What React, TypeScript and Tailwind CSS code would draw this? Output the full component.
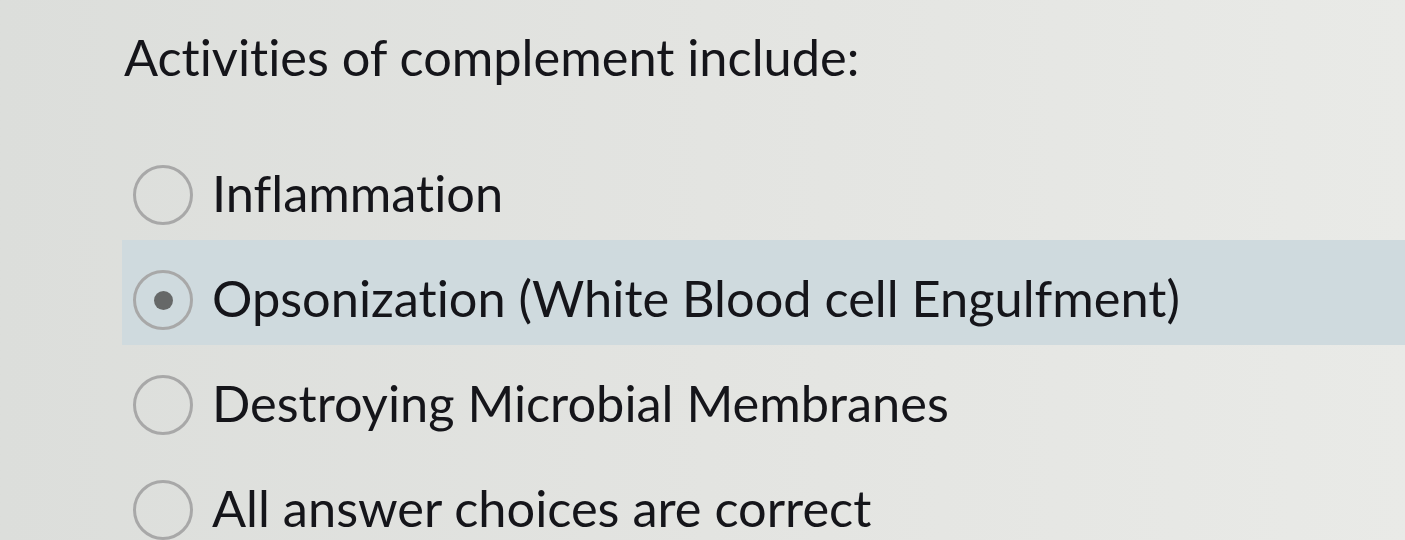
import React from "react";

const options = [
  { label: "Inflammation", selected: false },
  { label: "Opsonization (White Blood cell Engulfment)", selected: true },
  { label: "Destroying Microbial Membranes", selected: false },
  { label: "All answer choices are correct", selected: false },
];

export default function App() {
  return (
    <div
      className="w-[1405px] h-[540px] overflow-hidden bg-gradient-to-r from-[#dcdedb] via-[#e3e4e1] to-[#e9eae7] text-[#15151a] [font-variant-ligatures:none]"
      style={{ fontFamily: "Lato, 'Open Sans', sans-serif" }}
    >
      <div className="pt-[27px] pl-[124px] text-[50.5px] leading-[60px]">
        Activities of complement include:
      </div>
      <div className="mt-[48px] pl-[122px] flex flex-col">
        {options.map((o) => (
          <div
            key={o.label}
            className={`h-[105px] flex items-start pl-[11px] pt-[28px] ${o.selected ? "bg-[#cfdade]" : ""}`}
          >
            <div className="mt-[2px] w-[60px] h-[60px] rounded-full border-[3px] border-[#a8a8a8] flex items-center justify-center shrink-0">
              {o.selected && <div className="w-[19px] h-[19px] rounded-full bg-[#666868]" />}
            </div>
            <div className="ml-[19px] text-[50.5px] leading-[60px] whitespace-nowrap">{o.label}</div>
          </div>
        ))}
      </div>
    </div>
  );
}
